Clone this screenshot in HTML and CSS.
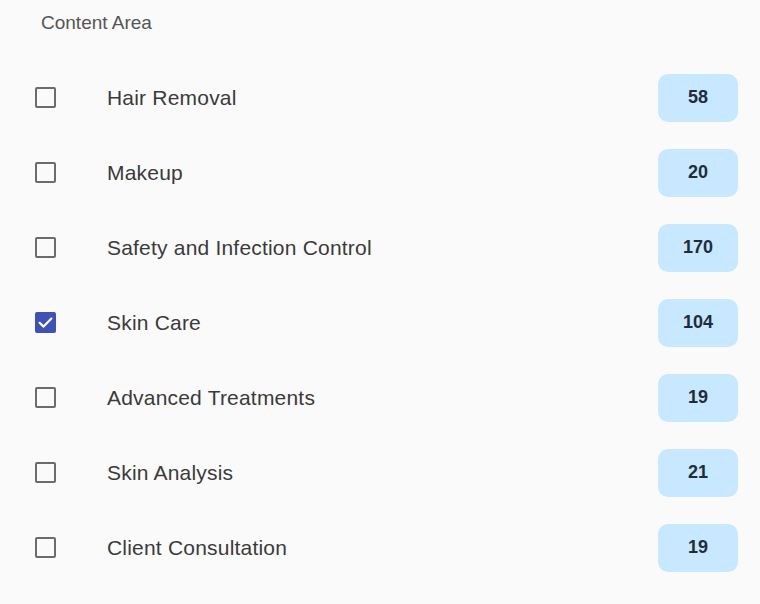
FILE: index.html
```html
<!DOCTYPE html>
<html lang="en">
<head>
    <meta charset="UTF-8">
    <meta name="viewport" content="width=device-width, initial-scale=1.0">
    <title>Content Area</title>
    <link rel="stylesheet" href="styles.css">
</head>
<body>
    <div class="panel">
        <div class="panel-title">Content Area</div>

        <ul class="area-list">
            <li class="area-row">
                <span class="box"></span>
                <span class="area-name">Hair Removal</span>
                <span class="count">58</span>
            </li>
            <li class="area-row">
                <span class="box"></span>
                <span class="area-name">Makeup</span>
                <span class="count">20</span>
            </li>
            <li class="area-row">
                <span class="box"></span>
                <span class="area-name">Safety and Infection Control</span>
                <span class="count">170</span>
            </li>
            <li class="area-row">
                <span class="box checked">
                    <svg width="21" height="21" viewBox="0 0 21 21">
                        <path d="M4.6 10.8 L8.6 14.6 L16.4 6.6" fill="none" stroke="#fff" stroke-width="2.2" stroke-linecap="round" stroke-linejoin="round"/>
                    </svg>
                </span>
                <span class="area-name">Skin Care</span>
                <span class="count">104</span>
            </li>
            <li class="area-row">
                <span class="box"></span>
                <span class="area-name">Advanced Treatments</span>
                <span class="count">19</span>
            </li>
            <li class="area-row">
                <span class="box"></span>
                <span class="area-name">Skin Analysis</span>
                <span class="count">21</span>
            </li>
            <li class="area-row">
                <span class="box"></span>
                <span class="area-name">Client Consultation</span>
                <span class="count">19</span>
            </li>
        </ul>
    </div>
</body>
</html>
```
FILE: styles.css
```css
* {
    margin: 0;
    padding: 0;
    box-sizing: border-box;
}
body {
    width: 760px;
    height: 604px;
    background-color: #fafafa;
    font-family: 'Liberation Sans', Arial, sans-serif;
    overflow: hidden;
}
.panel {
    padding: 12px 22px 0 35px;
}
.panel-title {
    font-size: 19px;
    line-height: 22px;
    color: #555555;
    margin-left: 6px;
    margin-bottom: 26px;
}
.area-list {
    list-style: none;
}
.area-row {
    display: flex;
    align-items: center;
    height: 75px;
}
.box {
    width: 21px;
    height: 21px;
    border: 2px solid #6b6b6b;
    border-radius: 2px;
    flex-shrink: 0;
    position: relative;
}
.box.checked {
    background-color: #3f51b5;
    border-color: #3f51b5;
}
.box svg {
    position: absolute;
    top: -2px;
    left: -2px;
}
.area-name {
    margin-left: 51px;
    font-size: 21px;
    letter-spacing: 0.2px;
    color: #3a3a3a;
}
.count {
    margin-left: auto;
    width: 80px;
    height: 48px;
    border-radius: 10px;
    background-color: #c7e8ff;
    display: flex;
    align-items: center;
    justify-content: center;
    font-size: 18px;
    font-weight: 700;
    color: #1f2d3a;
}
```
